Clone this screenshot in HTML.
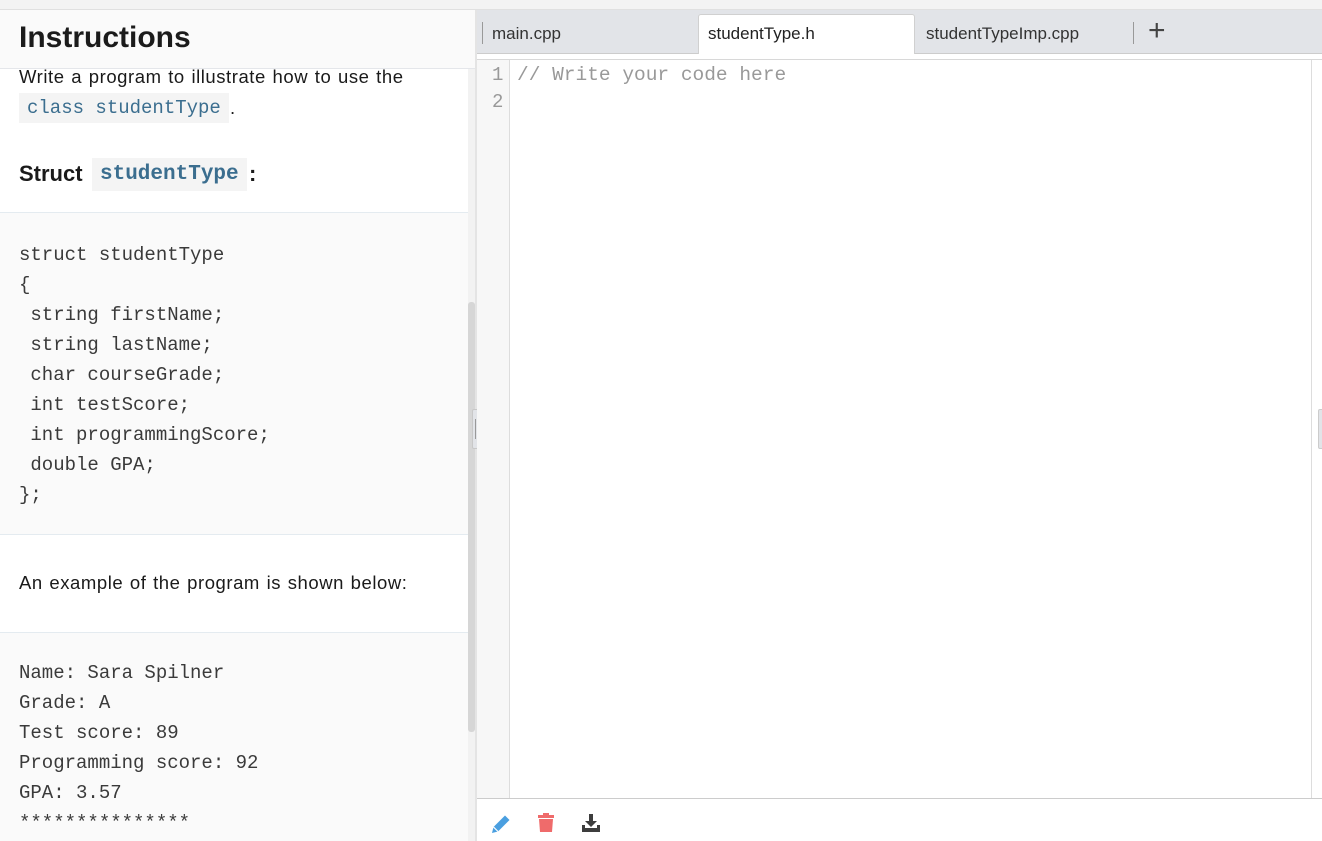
<!DOCTYPE html>
<html><head><meta charset="utf-8"><style>
*{margin:0;padding:0;box-sizing:border-box}
body{width:1322px;height:841px;overflow:hidden;background:#fff;font-family:"Liberation Sans",sans-serif;position:relative;color:#1a1a1a}
.a{position:absolute}
.mono{font-family:"Liberation Mono",monospace}
.code{font-family:"Liberation Mono",monospace;font-size:19px;color:#3a3a3a;line-height:30px;white-space:pre}
.t{font-size:18.5px;letter-spacing:0.55px;word-spacing:1px}
</style></head><body>
<div class="a" style="left:0;top:0;width:1322px;height:10px;background:#f3f3f3;border-bottom:1px solid #e0e0e0"></div>
<div class="a" style="left:0;top:10px;width:475px;height:831px;background:#fff"></div>
<div class="a" style="left:0;top:10px;width:475px;height:59px;background:#fafafa;border-bottom:1px solid #e4e6ea"></div>
<div class="a" style="left:19px;top:21px;font-size:30px;font-weight:bold;color:#1b1b1b">Instructions</div>
<div class="a t" style="left:19px;top:66px;">Write a program to illustrate how to use the</div>
<div class="a mono" style="left:19px;top:93px;height:30px;padding:5px 8px;background:#f4f4f4;font-size:19px;color:#3b6e8f;line-height:20px">class studentType</div>
<div class="a t" style="left:230px;top:97px">.</div>
<div class="a" style="left:19px;top:161px;font-size:22px;font-weight:bold">Struct</div>
<div class="a mono" style="left:92px;top:158px;height:33px;padding:4px 8px;background:#f4f4f4;font-size:21px;font-weight:bold;color:#3b6e8f;line-height:25px">studentType</div>
<div class="a" style="left:249px;top:161px;font-size:22px;font-weight:bold">:</div>
<div class="a" style="left:0;top:212px;width:468px;height:323px;background:#fafafa;border-top:1px solid #e4ebf0;border-bottom:1px solid #e4ebf0"></div>
<div class="a code" style="left:19px;top:240px">struct studentType
{
 string firstName;
 string lastName;
 char courseGrade;
 int testScore;
 int programmingScore;
 double GPA;
};</div>
<div class="a t" style="left:19px;top:572px">An example of the program is shown below:</div>
<div class="a" style="left:0;top:632px;width:468px;height:209px;background:#fafafa;border-top:1px solid #e4ebf0"></div>
<div class="a code" style="left:19px;top:658px">Name: Sara Spilner
Grade: A
Test score: 89
Programming score: 92
GPA: 3.57
***************</div>
<div class="a" style="left:468px;top:69px;width:7px;height:772px;background:#f2f2f2"></div>
<div class="a" style="left:468px;top:302px;width:7px;height:430px;background:#d6d6d6;border-radius:3px"></div>
<div class="a" style="left:475px;top:10px;width:2px;height:831px;background:#e4e4e4"></div>
<div class="a" style="left:472px;top:409px;width:8px;height:40px;background:#e2e4e8;border:1px solid #c8c8c8;border-radius:2px"></div>
<div class="a" style="left:475px;top:419px;width:1px;height:20px;background:#999"></div>
<div class="a" style="left:477px;top:419px;width:1px;height:20px;background:#999"></div>
<div class="a" style="left:477px;top:10px;width:845px;height:44px;background:#e2e4e8;border-bottom:1px solid #ccc"></div>
<div class="a" style="left:482px;top:22px;width:1px;height:22px;background:#999"></div>
<div class="a" style="left:492px;top:24px;font-size:17px;color:#333">main.cpp</div>
<div class="a" style="left:698px;top:14px;width:217px;height:41px;background:#fff;border:1px solid #d0d0d0;border-bottom:none;border-radius:3px 3px 0 0"></div>
<div class="a" style="left:708px;top:24px;font-size:17px;color:#222">studentType.h</div>
<div class="a" style="left:926px;top:24px;font-size:17px;color:#333">studentTypeImp.cpp</div>
<div class="a" style="left:1133px;top:22px;width:1px;height:22px;background:#999"></div>
<div class="a" style="left:1148px;top:14px;font-size:30px;color:#444;line-height:34px">+</div>
<div class="a" style="left:477px;top:54px;width:845px;height:6px;background:#fff"></div>
<div class="a" style="left:477px;top:59px;width:845px;height:1px;background:#d8d8d8"></div>
<div class="a" style="left:477px;top:60px;width:33px;height:738px;background:#f7f7f7;border-right:1px solid #ddd"></div>
<div class="a mono" style="left:492px;top:62px;font-size:19px;line-height:27px;color:#999;white-space:pre">1
2</div>
<div class="a mono" style="left:517px;top:62px;font-size:19.5px;line-height:27px;color:#999;white-space:pre">// Write your code here</div>
<div class="a" style="left:1311px;top:60px;width:1px;height:738px;background:#ddd"></div>
<div class="a" style="left:1318px;top:409px;width:6px;height:40px;background:#e2e4e8;border:1px solid #ccc;border-radius:2px"></div>
<div class="a" style="left:477px;top:798px;width:845px;height:1px;background:#ccc"></div>
<svg class="a" style="left:491px;top:813px" width="22" height="22" viewBox="0 0 22 22"><path d="M1 20 L2.5 14 L14 2.5 L18.5 7 L7 18.5 Z" fill="#4a9fe0"/><path d="M2.5 14 L7 18.5" stroke="#fff" stroke-width="1.2"/></svg>
<svg class="a" style="left:537px;top:813px" width="18" height="20" viewBox="0 0 18 20"><rect x="1" y="2" width="16" height="3" fill="#ef6b6b"/><rect x="6" y="0" width="6" height="2" fill="#ef6b6b"/><path d="M2 6 H16 L15 19 H3 Z" fill="#ef6b6b"/></svg>
<svg class="a" style="left:581px;top:813px" width="20" height="20" viewBox="0 0 20 20"><path d="M8 1 H12 V8 H16 L10 14 L4 8 H8 Z" fill="#3d3d3d"/><path d="M1 12 H4 V15 H16 V12 H19 V19 H1 Z" fill="#3d3d3d"/></svg>
</body></html>
